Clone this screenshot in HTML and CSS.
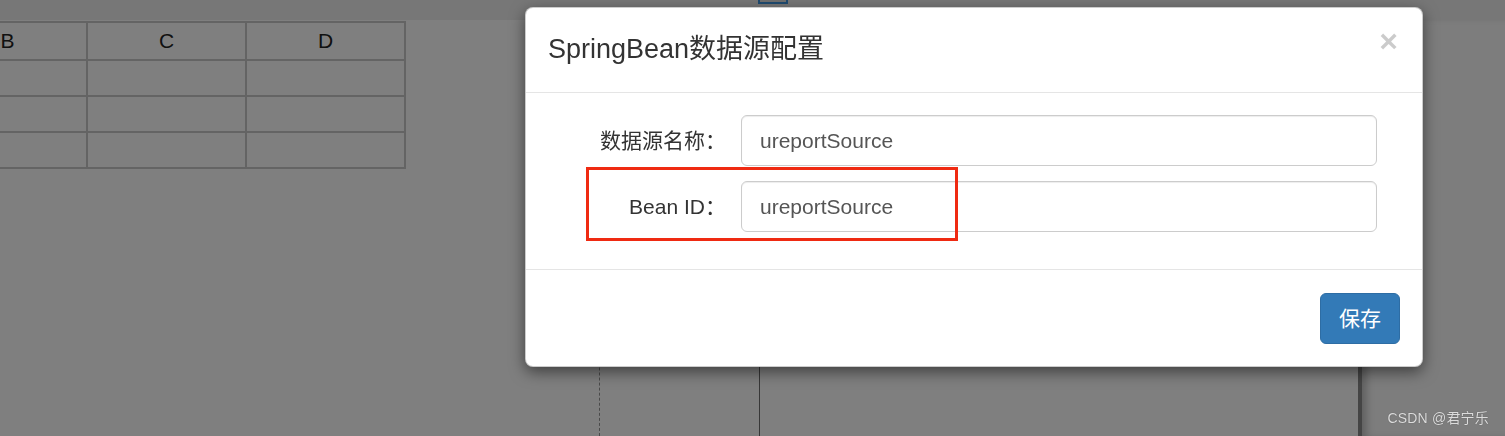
FILE: index.html
```html
<!DOCTYPE html>
<html lang="zh-CN">
<head>
<meta charset="utf-8">
<title>SpringBean数据源配置</title>
<link rel="stylesheet" href="styles.css">
</head>
<body>
<div class="app">
  <div class="toolbar">
    <span class="tool-btn"></span>
  </div>
  <div class="workspace">
    <div class="sheet">
      <div class="grid">
        <div class="cell head">B</div>
        <div class="cell head">C</div>
        <div class="cell head">D</div>
        <div class="cell"></div><div class="cell"></div><div class="cell"></div>
        <div class="cell"></div><div class="cell"></div><div class="cell"></div>
        <div class="cell"></div><div class="cell"></div><div class="cell"></div>
      </div>
      <div class="page-guides"></div>
    </div>
    <aside class="props"></aside>
  </div>
</div>

<div class="backdrop"></div>

<div class="modal">
  <div class="modal-header">
    <h4 class="modal-title">SpringBean数据源配置</h4>
    <button class="close" type="button">×</button>
  </div>
  <div class="modal-body">
    <div class="form-row">
      <label class="form-label">数据源名称<span class="colon">：</span></label>
      <input class="form-input" type="text" value="ureportSource">
    </div>
    <div class="form-row">
      <label class="form-label">Bean ID<span class="colon">：</span></label>
      <input class="form-input" type="text" value="ureportSource">
    </div>
  </div>
  <div class="modal-footer">
    <button class="btn-primary" type="button">保存</button>
  </div>
</div>

<div class="highlight"></div>
<div class="watermark">CSDN @君宁乐</div>
</body>
</html>
```

FILE: styles.css
```css
html, body {
  margin: 0;
  padding: 0;
  width: 100%;
  height: 100%;
  overflow: hidden;
  background: #fff;
  font-family: "Liberation Sans", "Noto Sans CJK SC", sans-serif;
}

.app {
  display: flex;
  flex-direction: column;
  height: 100%;
}

/* top toolbar */
.toolbar {
  height: 20px;
  background: #eeeeee;
  overflow: hidden;
  flex: none;
}

.tool-btn {
  display: block;
  width: 26px;
  height: 20px;
  margin-left: 758px;
  margin-top: -20px;
  border: 2px solid #3e96e2;
  background: #e0e0e0;
}

.workspace {
  flex: 1;
  display: flex;
  min-height: 0;
}

.sheet {
  flex: 1;
  display: flex;
  flex-direction: column;
  overflow: hidden;
}

/* spreadsheet grid */
.grid {
  display: grid;
  grid-template-columns: repeat(3, 157px);
  grid-template-rows: 36px repeat(3, 34px);
  gap: 2px;
  padding: 2px;
  background: #c8c8c8;
  width: max-content;
  margin-left: -73px;
  margin-top: 1px;
}

.cell {
  background: #fff;
}

.cell.head {
  display: flex;
  align-items: center;
  justify-content: center;
  font-size: 21px;
  color: #222;
}

/* printable page guides */
.page-guides {
  margin-top: 12px;
  margin-left: 599px;
  width: 159px;
  flex: 1;
  border-left: 1px dashed #949494;
  border-right: 1px solid #6e6e6e;
}

/* right property panel */
.props {
  width: 143px;
  flex: none;
  border-left: 4px solid #8a8a8a;
  box-shadow: inset 8px 0 8px -4px rgba(0, 0, 0, 0.25);
  background: #fafafa;
}

.backdrop {
  position: fixed;
  inset: 0;
  background: rgba(0, 0, 0, 0.5);
}

/* dialog */
.modal {
  position: absolute;
  left: 525px;
  top: 7px;
  width: 896px;
  background: #fff;
  border: 1px solid rgba(0, 0, 0, 0.2);
  border-radius: 8px;
  box-shadow: 0 5px 15px rgba(0, 0, 0, 0.5);
  color: #333;
}

.modal-header {
  display: flex;
  align-items: flex-start;
  justify-content: space-between;
  padding: 21px 24px 23px 22px;
  border-bottom: 1px solid #e5e5e5;
}

.modal-title {
  margin: 0;
  font-size: 27px;
  font-weight: 400;
  line-height: 40px;
  color: #333;
}

.close {
  border: 0;
  background: none;
  padding: 0;
  margin-top: -4px;
  font-family: "Liberation Sans", sans-serif;
  font-size: 32px;
  font-weight: 700;
  line-height: 32px;
  color: #000;
  opacity: 0.2;
  cursor: pointer;
}

.modal-body {
  padding: 22px 45px 22px 22px;
  display: flex;
  flex-direction: column;
  gap: 15px;
}

.modal-body .form-row:last-child {
  margin-bottom: 15px;
}

.form-row {
  display: grid;
  grid-template-columns: 178px 1fr;
  column-gap: 15px;
  align-items: center;
}

.form-label {
  text-align: right;
  font-size: 21px;
  color: #333;
  padding-bottom: 4px;
}

.colon {
  font-family: "Noto Sans CJK SC", sans-serif;
}

.form-input {
  box-sizing: border-box;
  height: 51px;
  width: 100%;
  padding: 9px 18px;
  font-family: "Liberation Sans", "Noto Sans CJK SC", sans-serif;
  font-size: 21px;
  color: #555;
  background: #fff;
  border: 1px solid #ccc;
  border-radius: 6px;
  box-shadow: inset 0 1px 1px rgba(0, 0, 0, 0.075);
  outline: none;
}

.modal-footer {
  padding: 23px 22px 22px;
  border-top: 1px solid #e5e5e5;
  display: flex;
  justify-content: flex-end;
}

.btn-primary {
  height: 51px;
  padding: 0 18px 3px;
  font-family: "Liberation Sans", "Noto Sans CJK SC", sans-serif;
  font-size: 21px;
  color: #fff;
  background: #337ab7;
  border: 1px solid #2e6da4;
  border-radius: 6px;
  cursor: pointer;
}

/* annotation frame */
.highlight {
  position: absolute;
  left: 586px;
  top: 167px;
  width: 366px;
  height: 68px;
  border: 3px solid #ef2a12;
}

.watermark {
  position: absolute;
  right: 16px;
  bottom: 9px;
  font-size: 14px;
  color: #dcdcdc;
  text-shadow: 0 0 1px rgba(0, 0, 0, 0.4);
  letter-spacing: 0.2px;
}
```
